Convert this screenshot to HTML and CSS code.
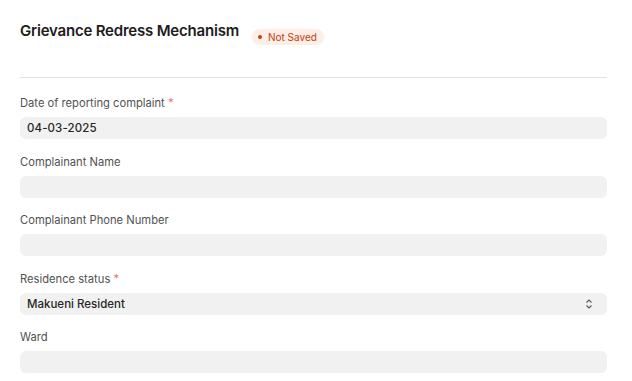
FILE: index.html
```html
<!DOCTYPE html>
<html>
<head>
<meta charset="utf-8">
<link rel="stylesheet" href="styles.css">
</head>
<body>
<div class="page">
  <div class="header">
    <h1 class="title">Grievance Redress Mechanism</h1>
    <span class="badge"><span class="dot"></span>Not Saved</span>
  </div>
  <div class="divider"></div>
  <div class="form">
    <div class="field">
      <div class="label">Date of reporting complaint <span class="req">*</span></div>
      <div class="input">04-03-2025</div>
    </div>
    <div class="field">
      <div class="label">Complainant Name</div>
      <div class="input"></div>
    </div>
    <div class="field">
      <div class="label">Complainant Phone Number</div>
      <div class="input"></div>
    </div>
    <div class="field">
      <div class="label">Residence status <span class="req">*</span></div>
      <div class="input select">Makueni Resident
        <svg class="chev" width="8" height="12" viewBox="0 0 8 12"><path d="M1.5 4.5 L4 2 L6.5 4.5" fill="none" stroke="#555" stroke-width="1.1"/><path d="M1.5 7.5 L4 10 L6.5 7.5" fill="none" stroke="#555" stroke-width="1.1"/></svg>
      </div>
    </div>
    <div class="field">
      <div class="label">Ward</div>
      <div class="input"></div>
    </div>
  </div>
</div>
</body>
</html>
```
FILE: styles.css
```css
html, body { margin: 0; padding: 0; background: #fff; }
body { font-family: Inter, "Noto Sans", sans-serif; color: #171717; }
.page { padding: 0 25px 0 20px; }
.header { display: flex; align-items: flex-start; height: 77px; }
.title { margin: 21px 0 0 0; font-size: 15px; font-weight: 600; line-height: 20px; letter-spacing: -0.2px; color: #1c1c1c; }
.badge { display: inline-flex; align-items: center; margin: 29px 0 0 13px; height: 16px; padding: 0 7px 0 6px; border-radius: 8px; background: #fdeee6; color: #c2410c; font-size: 10px; line-height: 16px; font-weight: 400; }
.dot { width: 4px; height: 4px; border-radius: 50%; background: #c2410c; margin-right: 6px; }
.divider { height: 1px; background: #e2e2e2; }
.form { display: flex; flex-direction: column; gap: 14.5px; padding-top: 17px; }
.field { display: flex; flex-direction: column; }
.label { font-size: 11.2px; line-height: 16px; color: #525252; margin-bottom: 6px; }
.req { color: #e57373; }
.input { height: 22px; border-radius: 6px; background: #f1f1f1; padding: 0 7px; font-size: 11.5px; line-height: 22px; font-weight: 500; color: #262626; letter-spacing: 0.1px; }
.select { display: flex; align-items: center; justify-content: space-between; letter-spacing: 0; }
.chev { margin-right: 7px; }
```
